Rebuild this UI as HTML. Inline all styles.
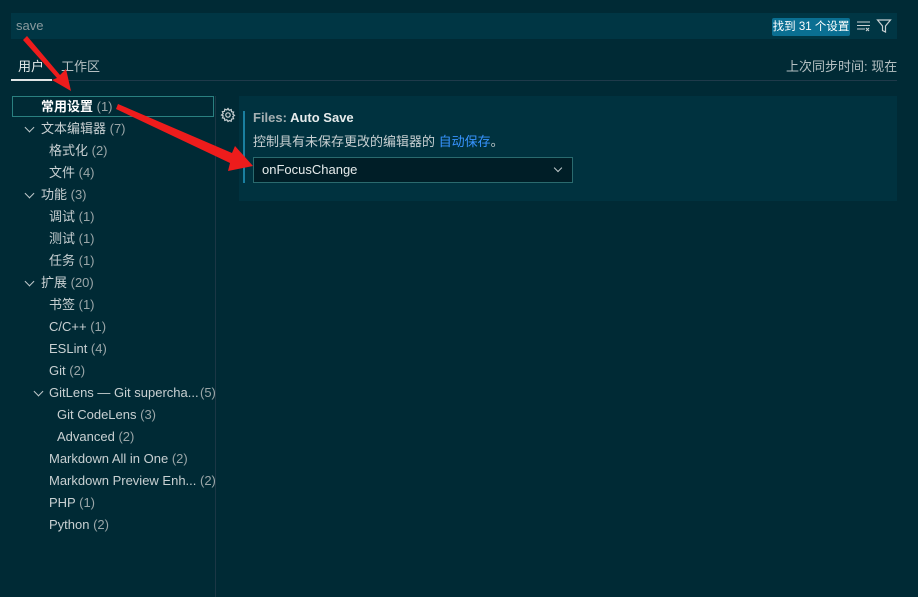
<!DOCTYPE html>
<html><head><meta charset="utf-8"><style>
body{margin:0;width:918px;height:597px;background:#002a35;font-family:"Liberation Sans","Noto Sans CJK SC",sans-serif;font-size:13px;color:#c8d0d2;position:relative;overflow:hidden}
.a{position:absolute;white-space:nowrap}
.t{position:absolute;white-space:nowrap;line-height:22px}
.c{color:#9aa6a8}
.chev{position:absolute;width:6px;height:6px;border-right:1.3px solid #bfc8ca;border-bottom:1.3px solid #bfc8ca;transform:rotate(45deg)}
</style></head><body>
<div class="a" style="left:11px;top:13px;width:886px;height:26px;background:#003644"></div>
<div class="a" style="left:16px;top:18px;color:#8a9a9e">save</div>
<div class="a" style="left:772px;top:18px;width:78px;height:18px;background:#0a6f92;color:#fff;font-size:11.5px;line-height:18px;text-align:center;border-radius:2px">找到 31 个设置</div>
<svg class="a" style="left:856px;top:18px" width="16" height="16" viewBox="0 0 16 16" fill="none" stroke="#c8d0d2" stroke-width="1.1"><path d="M1 4h13M1 7.5h13M1 11h8M10 10l3 3M13 10l-3 3"/></svg>
<svg class="a" style="left:876px;top:18px" width="16" height="16" viewBox="0 0 16 16" fill="none" stroke="#c8d0d2" stroke-width="1.2"><path d="M1.5 2h13L9.5 8v6l-3-1.5V8z"/></svg>
<div class="a" style="left:18px;top:56px;color:#e6ecec;font-size:13px">用户</div>
<div class="a" style="left:61px;top:56px;color:#b5c0c2">工作区</div>
<div class="a" style="left:11px;top:80px;width:886px;height:1px;background:#1f3a4a"></div>
<div class="a" style="left:11px;top:79px;width:41px;height:2px;background:#e0e6e6"></div>
<div class="a" style="left:786px;top:56px;color:#b5c0c2">上次同步时间: 现在</div>
<div class="a" style="left:215px;top:96px;width:1px;height:501px;background:#1b3745"></div>
<div class="a" style="left:12px;top:96px;width:200px;height:19px;border:1px solid #2a8080"></div>
<div class="t" style="left:41px;top:96px;color:#fff;font-weight:bold">常用设置 <span style="font-weight:normal" class="c">(1)</span></div>
<div class="chev" style="left:26px;top:124px"></div>
<div class="t" style="left:41px;top:118px">文本编辑器 <span class="c">(7)</span></div>
<div class="t" style="left:49px;top:140px">格式化 <span class="c">(2)</span></div>
<div class="t" style="left:49px;top:162px">文件 <span class="c">(4)</span></div>
<div class="chev" style="left:26px;top:190px"></div>
<div class="t" style="left:41px;top:184px">功能 <span class="c">(3)</span></div>
<div class="t" style="left:49px;top:206px">调试 <span class="c">(1)</span></div>
<div class="t" style="left:49px;top:228px">测试 <span class="c">(1)</span></div>
<div class="t" style="left:49px;top:250px">任务 <span class="c">(1)</span></div>
<div class="chev" style="left:26px;top:278px"></div>
<div class="t" style="left:41px;top:272px">扩展 <span class="c">(20)</span></div>
<div class="t" style="left:49px;top:294px">书签 <span class="c">(1)</span></div>
<div class="t" style="left:49px;top:316px">C/C++ <span class="c">(1)</span></div>
<div class="t" style="left:49px;top:338px">ESLint <span class="c">(4)</span></div>
<div class="t" style="left:49px;top:360px">Git <span class="c">(2)</span></div>
<div class="chev" style="left:35px;top:388px"></div>
<div class="t" style="left:49px;top:382px">GitLens — Git supercha...</div><div class="t c" style="left:200px;top:382px">(5)</div>
<div class="t" style="left:57px;top:404px">Git CodeLens <span class="c">(3)</span></div>
<div class="t" style="left:57px;top:426px">Advanced <span class="c">(2)</span></div>
<div class="t" style="left:49px;top:448px">Markdown All in One <span class="c">(2)</span></div>
<div class="t" style="left:49px;top:470px">Markdown Preview Enh...</div><div class="t c" style="left:200px;top:470px">(2)</div>
<div class="t" style="left:49px;top:492px">PHP <span class="c">(1)</span></div>
<div class="t" style="left:49px;top:514px">Python <span class="c">(2)</span></div>
<svg class="a" style="left:220px;top:107px" width="16" height="16" viewBox="0 0 16 16" fill="none" stroke="#c8d0d2" stroke-width="1.2"><circle cx="8" cy="8" r="2.2"/><path d="M8 1.5l1.2 1.8 2-.7.3 2.1 2.1.4-.8 2 1.7 1.3-1.7 1.3.8 2-2.1.4-.3 2.1-2-.7L8 14.5l-1.2-1.8-2 .7-.3-2.1-2.1-.4.8-2L1.5 8l1.7-1.3-.8-2 2.1-.4.3-2.1 2 .7z"/></svg>
<div class="a" style="left:239px;top:96px;width:658px;height:105px;background:#00323f"></div>
<div class="a" style="left:243px;top:111px;width:2px;height:72px;background:#1a7fa0"></div>
<div class="a" style="left:253px;top:110px;color:#a5b0b2;font-weight:bold">Files: <span style="color:#e6ecec">Auto Save</span></div>
<div class="a" style="left:253px;top:131px;color:#c8d0d2">控制具有未保存更改的编辑器的 <span style="color:#3794ff">自动保存</span>。</div>
<div class="a" style="left:253px;top:157px;width:318px;height:24px;background:#001e27;border:1px solid #2a6a6e"></div>
<div class="a" style="left:262px;top:162px;color:#e6ecec">onFocusChange</div>
<div class="chev" style="left:555px;top:165px;width:5px;height:5px"></div>
<svg class="a" style="left:0;top:0" width="918" height="597"><g fill="#ee1c1c"><path d="M23 40L27 36 60 75 66 69 71 91 52 80 57 78z"/><path d="M116 109L118 104 232 153 235 146 253 166 228 171 230 163z"/></g></svg>
</body></html>
